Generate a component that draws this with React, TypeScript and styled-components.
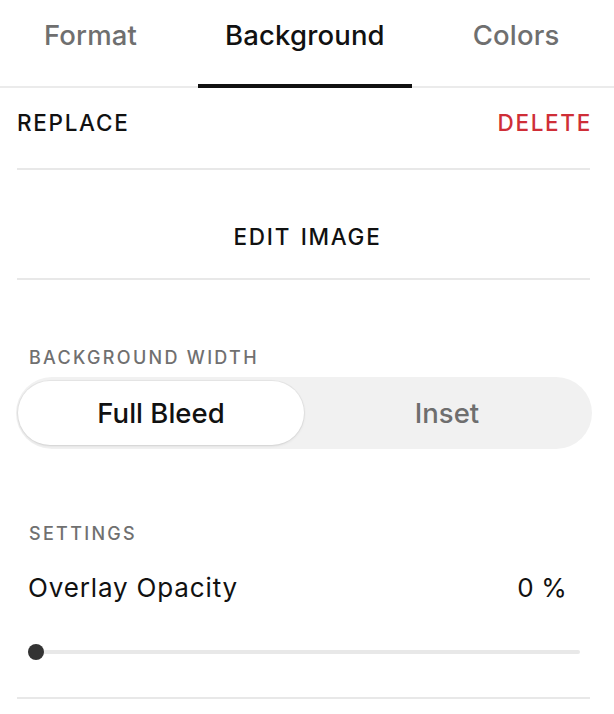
import React from 'react';
import styled, { createGlobalStyle } from 'styled-components';

const GlobalStyle = createGlobalStyle`
  html, body {
    margin: 0;
    padding: 0;
    background: #fff;
  }
  body {
    font-family: Inter, "Noto Sans", sans-serif;
    color: #111;
    -webkit-font-smoothing: antialiased;
  }
`;

const Panel = styled.div`
  width: 614px;
  height: 714px;
  overflow: hidden;
  background: #fff;
`;

const TabBar = styled.div`
  display: flex;
  align-items: flex-end;
  gap: 34px;
  padding-left: 17px;
  border-bottom: 2px solid #ebebeb;
`;

const Tab = styled.div<{ $active?: boolean }>`
  padding: 0 27px 14px;
  line-height: 70px;
  font-size: 27.5px;
  font-weight: 500;
  letter-spacing: 0.15px;
  color: ${(p) => (p.$active ? '#111' : '#6f6f6f')};
  border-bottom: 4px solid ${(p) => (p.$active ? '#111' : 'transparent')};
  margin-bottom: -2px;
  cursor: pointer;
`;

const Content = styled.div`
  padding: 0 24px 0 17px;
`;

const ActionRow = styled.div`
  display: flex;
  justify-content: space-between;
  padding: 13px 0 23px;
  border-bottom: 2px solid #e8e8e8;
`;

const ActionButton = styled.div<{ $danger?: boolean }>`
  font-size: 22.5px;
  line-height: 44px;
  font-weight: 500;
  letter-spacing: 1.7px;
  word-spacing: 2px;
  color: ${(p) => (p.$danger ? '#cf2e37' : '#111')};
  margin-right: ${(p) => (p.$danger ? '-2px' : '0')};
  cursor: pointer;
`;

const EditRow = styled.div`
  display: flex;
  justify-content: center;
  padding: 45px 0 19px 8px;
  border-bottom: 2px solid #e8e8e8;
`;

const Section = styled.div<{ $top: number }>`
  margin-top: ${(p) => p.$top}px;
`;

const SectionLabel = styled.div`
  padding-left: 12px;
  font-size: 18px;
  line-height: 24px;
  font-weight: 500;
  letter-spacing: 2.3px;
  color: #707070;
`;

const Segmented = styled.div`
  display: grid;
  grid-template-columns: 1fr 1fr;
  margin: 7px -2px 0 -1px;
  padding: 4px 2px;
  height: 72px;
  box-sizing: border-box;
  border-radius: 36px;
  background: #f1f1f1;
`;

const Segment = styled.div<{ $active?: boolean }>`
  display: flex;
  align-items: center;
  justify-content: center;
  border-radius: 32px;
  font-size: 27.5px;
  font-weight: 500;
  color: ${(p) => (p.$active ? '#111' : '#6e6e6e')};
  background: ${(p) => (p.$active ? '#fff' : 'transparent')};
  box-shadow: ${(p) =>
    p.$active ? '0 1px 3px rgba(0, 0, 0, 0.10), 0 0 0 1px rgba(0, 0, 0, 0.04)' : 'none'};
  cursor: pointer;
`;

const SettingRow = styled.div`
  display: flex;
  justify-content: space-between;
  margin-top: 26px;
  padding: 0 23px 0 11px;
  font-size: 26px;
  line-height: 32px;
  color: #111;
`;

const SettingName = styled.span`
  letter-spacing: 0.85px;
`;

const SettingValue = styled.span`
  letter-spacing: 0.2px;
`;

const SliderWrap = styled.div`
  margin: 40px 10px 0 11px;
  padding-bottom: 37px;
`;

const Track = styled.div`
  position: relative;
  height: 16px;
  display: flex;
  align-items: center;

  &::before {
    content: '';
    flex: 1;
    height: 4px;
    border-radius: 2px;
    background: #e8e8e8;
  }
`;

const Thumb = styled.div`
  position: absolute;
  top: 0;
  width: 16px;
  height: 16px;
  border-radius: 50%;
  background: #333;
`;

const Divider = styled.div`
  border-bottom: 2px solid #e8e8e8;
`;

const tabs = ['Format', 'Background', 'Colors'];

export default function App() {
  const opacity = 0;
  return (
    <>
      <GlobalStyle />
      <Panel>
        <TabBar>
          {tabs.map((t) => (
            <Tab key={t} $active={t === 'Background'}>
              {t}
            </Tab>
          ))}
        </TabBar>
        <Content>
          <ActionRow>
            <ActionButton>REPLACE</ActionButton>
            <ActionButton $danger>DELETE</ActionButton>
          </ActionRow>
          <EditRow>
            <ActionButton>EDIT IMAGE</ActionButton>
          </EditRow>
          <Section $top={66}>
            <SectionLabel>BACKGROUND WIDTH</SectionLabel>
            <Segmented>
              <Segment $active>Full Bleed</Segment>
              <Segment>Inset</Segment>
            </Segmented>
          </Section>
          <Section $top={73}>
            <SectionLabel>SETTINGS</SectionLabel>
            <SettingRow>
              <SettingName>Overlay Opacity</SettingName>
              <SettingValue>{opacity} %</SettingValue>
            </SettingRow>
            <SliderWrap>
              <Track>
                <Thumb style={{ left: `calc(${opacity}% * 0.97)` }} />
              </Track>
            </SliderWrap>
            <Divider />
          </Section>
        </Content>
      </Panel>
    </>
  );
}
